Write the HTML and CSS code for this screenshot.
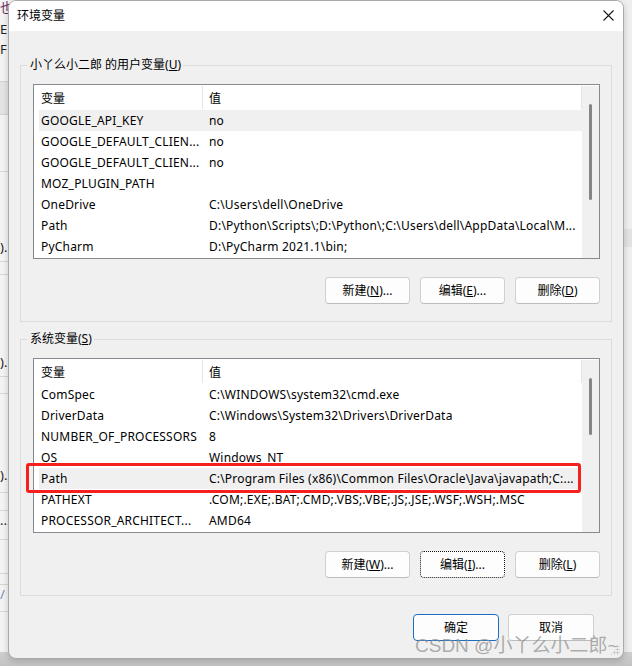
FILE: index.html
```html
<!DOCTYPE html>
<html lang="zh-CN">
<head>
<meta charset="utf-8">
<title>环境变量</title>
<link rel="stylesheet" href="styles.css">
</head>
<body>
<div class="desktop">
  <div class="behind-left">
    <div class="bl-row bl-text bl-h20 bl-pink">也</div>
    <div class="bl-row bl-text bl-h20">E</div>
    <div class="bl-row bl-text bl-h20">F</div>
    <div class="bl-row bl-h21"></div>
    <div class="bl-row bl-band"></div>
    <div class="bl-row bl-h57 bl-line"></div>
    <div class="bl-row bl-h66"></div>
    <div class="bl-row bl-text bl-h24 bl-line">).</div>
    <div class="bl-row bl-h13 bl-line"></div>
    <div class="bl-row bl-h78"></div>
    <div class="bl-row bl-text bl-h24 bl-line">).</div>
    <div class="bl-row bl-h17 bl-line"></div>
    <div class="bl-row bl-h72"></div>
    <div class="bl-row bl-text bl-h27 bl-line">).</div>
    <div class="bl-row bl-h18 bl-line"></div>
    <div class="bl-row bl-text bl-h29 bl-line">...</div>
    <div class="bl-row bl-h34 bl-line"></div>
    <div class="bl-row bl-h11 bl-line"></div>
    <div class="bl-row bl-text bl-h27 bl-line bl-blue">/</div>
  </div>
  <div class="behind-right">
    <div class="br-top"></div>
    <div class="br-band"></div>
  </div>
  <div class="desk-bottom"></div>

  <div class="dialog">
    <div class="titlebar">
      <span class="title">环境变量</span>
      <span class="close" aria-label="关闭">
        <svg width="11" height="11" viewBox="0 0 11 11"><path d="M0.5 0.5 L10.5 10.5 M10.5 0.5 L0.5 10.5" stroke="#1a1a1a" stroke-width="1.1" fill="none"/></svg>
      </span>
    </div>
    <div class="body">
      <fieldset class="group group-user">
        <legend>小丫么小二郎 的用户变量(<u>U</u>)</legend>
        <div class="list">
          <div class="list-main">
            <div class="list-head"><span class="c1">变量</span><span class="c2">值</span></div>
            <div class="row sel"><span class="c1">GOOGLE_API_KEY</span><span class="c2">no</span></div>
            <div class="row"><span class="c1">GOOGLE_DEFAULT_CLIEN...</span><span class="c2">no</span></div>
            <div class="row"><span class="c1">GOOGLE_DEFAULT_CLIEN...</span><span class="c2">no</span></div>
            <div class="row"><span class="c1">MOZ_PLUGIN_PATH</span><span class="c2"></span></div>
            <div class="row"><span class="c1">OneDrive</span><span class="c2">C:\Users\dell\OneDrive</span></div>
            <div class="row"><span class="c1">Path</span><span class="c2">D:\Python\Scripts\;D:\Python\;C:\Users\dell\AppData\Local\M...</span></div>
            <div class="row"><span class="c1">PyCharm</span><span class="c2">D:\PyCharm 2021.1\bin;</span></div>
          </div>
          <div class="scroll"><div class="thumb thumb-user"></div></div>
        </div>
        <div class="btnrow">
          <button class="btn">新建(<u>N</u>)...</button>
          <button class="btn">编辑(<u>E</u>)...</button>
          <button class="btn">删除(<u>D</u>)</button>
        </div>
      </fieldset>

      <fieldset class="group group-sys">
        <legend>系统变量(<u>S</u>)</legend>
        <div class="list list-sys">
          <div class="list-main">
            <div class="list-head"><span class="c1">变量</span><span class="c2">值</span></div>
            <div class="row"><span class="c1">ComSpec</span><span class="c2">C:\WINDOWS\system32\cmd.exe</span></div>
            <div class="row"><span class="c1">DriverData</span><span class="c2">C:\Windows\System32\Drivers\DriverData</span></div>
            <div class="row"><span class="c1">NUMBER_OF_PROCESSORS</span><span class="c2">8</span></div>
            <div class="row"><span class="c1">OS</span><span class="c2">Windows_NT</span></div>
            <div class="row sel"><span class="c1">Path</span><span class="c2">C:\Program Files (x86)\Common Files\Oracle\Java\javapath;C:...</span></div>
            <div class="row"><span class="c1">PATHEXT</span><span class="c2">.COM;.EXE;.BAT;.CMD;.VBS;.VBE;.JS;.JSE;.WSF;.WSH;.MSC</span></div>
            <div class="row"><span class="c1">PROCESSOR_ARCHITECT...</span><span class="c2">AMD64</span></div>
          </div>
          <div class="scroll"><div class="thumb thumb-sys"></div></div>
          <div class="redbox"></div>
        </div>
        <div class="btnrow">
          <button class="btn">新建(<u>W</u>)...</button>
          <button class="btn focus">编辑(<u>I</u>)...</button>
          <button class="btn">删除(<u>L</u>)</button>
        </div>
      </fieldset>

      <div class="footer">
        <button class="btn fbtn primary">确定</button>
        <button class="btn fbtn">取消</button>
      </div>
    </div>
    <div class="grip"></div>
  </div>

  <div class="watermark">CSDN @小丫么小二郎~</div>
</div>
</body>
</html>
```

FILE: styles.css
```css
* { box-sizing: border-box; }
html, body { margin: 0; padding: 0; }
body {
  width: 632px;
  height: 666px;
  overflow: hidden;
  font-family: "Noto Sans", "Noto Sans CJK SC", sans-serif;
  font-size: 12px;
  color: #000;
}
.desktop {
  position: relative;
  width: 632px;
  height: 666px;
  background: #f0f0f0;
  overflow: hidden;
}

/* window behind the dialog */
.behind-left {
  position: absolute;
  left: 0;
  top: 0;
  width: 30px;
  height: 666px;
  background: #f3f3f3;
  display: flex;
  flex-direction: column;
}
.bl-row { flex: none; }
.bl-text { line-height: 18px; font-size: 13px; color: #222; white-space: nowrap; }
.bl-pink { color: #6a2a5a; line-height: 14px; }
.bl-blue { color: #6d8fb5; }
.bl-line { border-bottom: 1px solid #d6d6d6; }
.bl-h11 { height: 11px; }
.bl-h13 { height: 13px; }
.bl-h17 { height: 17px; }
.bl-h18 { height: 18px; }
.bl-h20 { height: 20px; }
.bl-h21 { height: 21px; }
.bl-h24 { height: 24px; }
.bl-h27 { height: 27px; }
.bl-h29 { height: 29px; }
.bl-h34 { height: 34px; }
.bl-h57 { height: 57px; }
.bl-h66 { height: 66px; }
.bl-h72 { height: 72px; }
.bl-h78 { height: 78px; }
.bl-band { height: 34px; background: #e3e3e3; border-top: 1px solid #d2d2d2; border-bottom: 1px solid #d2d2d2; }

.behind-right {
  position: absolute;
  right: 0;
  top: 0;
  width: 12px;
  height: 666px;
  background: #efefef;
  display: flex;
  flex-direction: column;
}
.br-top { height: 229px; }
.br-band { height: 18px; background: #e2e2e2; }

.desk-bottom {
  position: absolute;
  left: 0;
  right: 0;
  bottom: 0;
  height: 14px;
  background: linear-gradient(#cfcfcf, #c2c2c2);
}

/* dialog */
.dialog {
  position: absolute;
  left: 8px;
  top: 0;
  width: 616px;
  height: 659px;
  border: 1px solid #a9a9a9;
  border-radius: 8px;
  background: #f0f0f0;
  box-shadow: 0 2px 6px rgba(0, 0, 0, 0.18);
  display: flex;
  flex-direction: column;
  overflow: hidden;
}
.titlebar {
  flex: none;
  height: 30px;
  background: #fff;
  display: flex;
  align-items: center;
  justify-content: space-between;
  padding: 0 9px 2px 8px;
}
.title {
  font-family: "Noto Sans CJK SC", sans-serif;
  font-size: 12px;
  line-height: 16px;
}
.close { display: flex; width: 11px; height: 11px; }

.body {
  flex: 1;
  padding: 0 11px;
  display: flex;
  flex-direction: column;
}

/* group boxes */
.group {
  margin: 0;
  min-width: 0;
  border: 1px solid #dcdcdc;
  padding: 11px 11px 17px 12px;
}
.group-user { margin-top: 26px; }
.group-sys { margin-top: 9px; }
.group legend {
  font-family: "Noto Sans", "Noto Sans CJK SC", sans-serif;
  line-height: 16px;
  height: 16px;
  padding: 0 2px 0 3px;
  margin-left: -6px;
  color: #000;
}

/* list views */
.list {
  position: relative;
  height: 175px;
  border: 1px solid #858a91;
  background: #fff;
  display: flex;
}
.list-main {
  flex: 1;
  padding-left: 5px;
  min-width: 0;
}
.list-head {
  height: 25px;
  display: flex;
  align-items: center;
  position: relative;
}
.list-head .c1 { border-right: 1px solid #e5e5e5; height: 23px; display: flex; align-items: center; }
.list-head::after {
  content: "";
  position: absolute;
  right: 0;
  top: 1px;
  width: 1px;
  height: 23px;
  background: #e5e5e5;
}
.list-head .c1, .list-head .c2 { font-family: "Noto Sans CJK SC", sans-serif; letter-spacing: 0; }
.row {
  height: 21px;
  display: flex;
  align-items: center;
  white-space: nowrap;
  letter-spacing: 0.2px;
}
.row.sel { background: #f0f0f0; }
.c1 {
  flex: none;
  width: 164px;
  padding-left: 2px;
  overflow: hidden;
  white-space: nowrap;
}
.c2 {
  flex: 1;
  padding-left: 6px;
  overflow: hidden;
  white-space: nowrap;
}
.scroll {
  flex: none;
  width: 17px;
  background: #f0f0f0;
  position: relative;
  display: flex;
  justify-content: center;
  padding-top: 18px;
  margin-top: 1px;
}
.thumb {
  width: 3px;
  border-radius: 2px;
  background: #858585;
}
.thumb-user { height: 96px; }
.thumb-sys { height: 57px; }

.redbox {
  position: absolute;
  left: -8px;
  top: 104px;
  width: 555px;
  height: 30px;
  border: 3px solid #f5201e;
  border-radius: 3px;
}

/* buttons */
.btnrow {
  margin-top: 18px;
  display: flex;
  justify-content: flex-end;
  gap: 10px;
}
.btn {
  width: 85px;
  height: 27px;
  padding: 0;
  margin: 0;
  background: #fdfdfd;
  border: 1px solid #d0d0d0;
  border-bottom-color: #bcbcbc;
  border-radius: 4px;
  font-family: "Noto Sans", "Noto Sans CJK SC", sans-serif;
  font-size: 12px;
  color: #000;
  line-height: 16px;
}
.btn.focus { border: 1px dotted #111; }
.footer {
  margin-top: 18px;
  display: flex;
  justify-content: flex-end;
  gap: 9px;
  padding-right: 18px;
}
.fbtn { width: 86px; }
.btn.primary { border: 1px solid #1a6fc4; }

.grip {
  position: absolute;
  right: 3px;
  bottom: 3px;
  width: 10px;
  height: 10px;
  background: radial-gradient(circle, #b8b8b8 0.8px, transparent 1.2px) 0 0 / 3px 3px;
  clip-path: polygon(100% 0, 100% 100%, 0 100%);
}

.watermark {
  position: absolute;
  left: 415px;
  top: 634px;
  font-family: "Liberation Sans", "Noto Sans CJK SC", sans-serif;
  font-size: 19px;
  line-height: 24px;
  color: rgba(140, 140, 140, 0.7);
  white-space: nowrap;
}
```
